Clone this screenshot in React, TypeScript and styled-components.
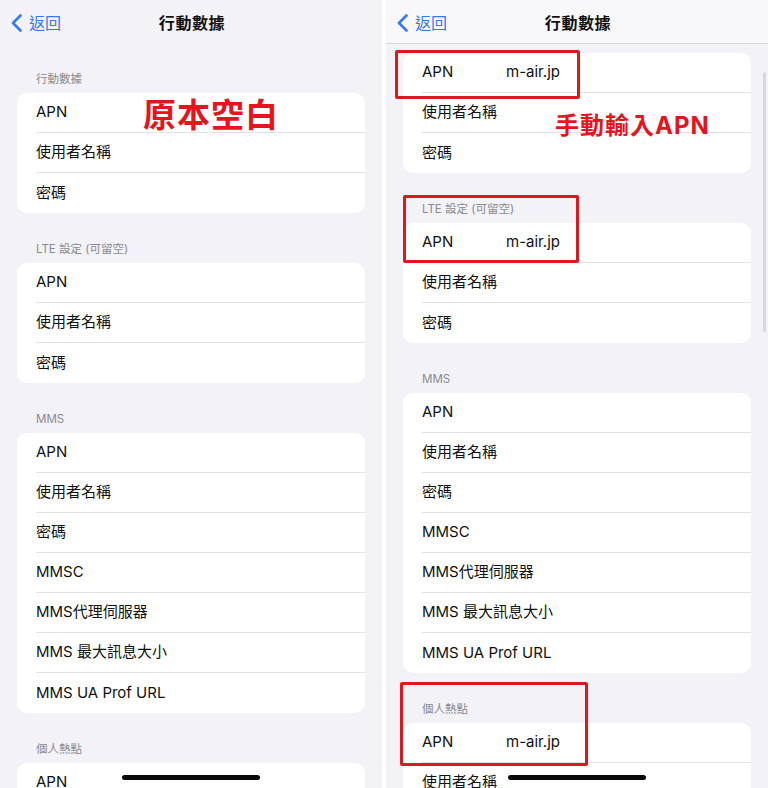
import React from 'react';
import styled, { createGlobalStyle } from 'styled-components';

interface IRow {
    label: string;
    value?: string;
}

interface ISection {
    title: string;
    rows: IRow[];
}

interface IMark {
    left: number;
    top: number;
    width: number;
    height: number;
}

const GlobalStyle = createGlobalStyle`
    html, body {
        margin: 0;
        padding: 0;
        background: #ffffff;
    }
    body {
        font-family: Inter, "Noto Sans CJK TC", "Noto Sans", sans-serif;
        -webkit-font-smoothing: antialiased;
    }
`;

const buildSections = (apn?: string): ISection[] => [
    {
        title: '行動數據',
        rows: [{ label: 'APN', value: apn }, { label: '使用者名稱' }, { label: '密碼' }],
    },
    {
        title: 'LTE 設定 (可留空)',
        rows: [{ label: 'APN', value: apn }, { label: '使用者名稱' }, { label: '密碼' }],
    },
    {
        title: 'MMS',
        rows: [
            { label: 'APN' },
            { label: '使用者名稱' },
            { label: '密碼' },
            { label: 'MMSC' },
            { label: 'MMS代理伺服器' },
            { label: 'MMS 最大訊息大小' },
            { label: 'MMS UA Prof URL' },
        ],
    },
    {
        title: '個人熱點',
        rows: [{ label: 'APN', value: apn }, { label: '使用者名稱' }, { label: '密碼' }],
    },
];

const rightMarks: IMark[] = [
    { left: 9, top: 50, width: 185, height: 49 },
    { left: 17, top: 195, width: 176, height: 68 },
    { left: 14, top: 682, width: 188, height: 84 },
];

const BackChevron = () => (
    <svg width="11" height="18" viewBox="0 0 11 18">
        <polyline
            points="9.5,1.5 2,9 9.5,16.5"
            fill="none"
            stroke="#3478f6"
            strokeWidth="2.6"
            strokeLinecap="round"
            strokeLinejoin="round"
        />
    </svg>
);

interface IPhoneProps {
    sections: ISection[];
    scroll: number;
    bordered: boolean;
    children?: React.ReactNode;
}

const Phone = (props: IPhoneProps): JSX.Element => {
    const { sections, scroll, bordered, children } = props;

    return (
        <PhoneWrap>
            <NavBar $bordered={bordered}>
                <BackButton>
                    <BackChevron />
                    <span>返回</span>
                </BackButton>
                <NavTitle>行動數據</NavTitle>
            </NavBar>
            <ScrollBody>
                <Content $scroll={scroll}>
                    {sections.map((section) => (
                        <Section key={section.title}>
                            <SectionTitle>{section.title}</SectionTitle>
                            <Card>
                                {section.rows.map((row) => (
                                    <Row key={row.label}>
                                        <RowLabel>{row.label}</RowLabel>
                                        {row.value && <RowValue>{row.value}</RowValue>}
                                    </Row>
                                ))}
                            </Card>
                        </Section>
                    ))}
                </Content>
            </ScrollBody>
            {children}
            <HomeIndicator />
        </PhoneWrap>
    );
};

const App = (): JSX.Element => {
    return (
        <>
            <GlobalStyle />
            <Page>
                <Phone sections={buildSections()} scroll={0} bordered={false}>
                    <BigNote>原本空白</BigNote>
                </Phone>
                <Phone sections={buildSections('m-air.jp')} scroll={40} bordered>
                    {rightMarks.map((mark) => (
                        <MarkBox
                            key={mark.top}
                            style={{ left: mark.left, top: mark.top, width: mark.width, height: mark.height }}
                        />
                    ))}
                    <SmallNote>手動輸入APN</SmallNote>
                    <ScrollIndicator />
                </Phone>
            </Page>
        </>
    );
};

export default App;

const Page = styled.div`
    display: grid;
    grid-template-columns: 382px 382px;
    column-gap: 4px;
    width: 768px;
    height: 788px;
    overflow: hidden;
    background: #ffffff;
`;

const PhoneWrap = styled.div`
    position: relative;
    display: flex;
    flex-direction: column;
    height: 788px;
    overflow: hidden;
    background: #f2f2f7;
`;

const NavBar = styled.div<{ $bordered: boolean }>`
    position: relative;
    z-index: 2;
    flex: 0 0 auto;
    height: 43px;
    display: flex;
    flex-direction: row;
    align-items: center;
    justify-content: center;
    background: ${(p) => (p.$bordered ? '#f8f8fa' : '#f2f2f7')};
    border-bottom: 1px solid ${(p) => (p.$bordered ? '#d9d9de' : 'transparent')};
`;

const BackButton = styled.div`
    position: absolute;
    left: 11px;
    top: 13px;
    display: flex;
    flex-direction: row;
    align-items: center;
    gap: 7px;
    color: #3478f6;
    font-size: 16px;
    line-height: 20px;
`;

const NavTitle = styled.div`
    font-size: 16px;
    font-weight: 600;
    color: #111111;
    letter-spacing: 0.6px;
    padding-left: 2px;
`;

const ScrollBody = styled.div`
    flex: 1 1 auto;
    overflow: hidden;
`;

const Content = styled.div<{ $scroll: number }>`
    display: flex;
    flex-direction: column;
    gap: 28px;
    padding: 27px 17px 40px 17px;
    margin-top: ${(p) => -p.$scroll}px;
`;

const Section = styled.div`
    display: flex;
    flex-direction: column;
`;

const SectionTitle = styled.div`
    padding-left: 19px;
    margin-bottom: 6px;
    font-size: 11.5px;
    line-height: 16px;
    color: #8a8a8f;
`;

const Card = styled.div`
    background: #ffffff;
    border-radius: 10px;
    overflow: hidden;
`;

const Row = styled.div`
    display: flex;
    flex-direction: row;
    align-items: center;
    height: 40px;
    margin-left: 19px;
    border-bottom: 1px solid #e3e3e6;
    box-sizing: border-box;
    &:last-child {
        border-bottom: none;
    }
`;

const RowLabel = styled.span`
    min-width: 84px;
    font-size: 15px;
    line-height: 20px;
    margin-top: -1px;
    color: #111111;
`;

const RowValue = styled.span`
    font-size: 15px;
    line-height: 20px;
    margin-top: -1px;
    color: #111111;
`;

const BigNote = styled.div`
    position: absolute;
    left: 143px;
    top: 97px;
    font-size: 33px;
    font-weight: 700;
    line-height: 36px;
    letter-spacing: 1px;
    color: #e6141c;
`;

const SmallNote = styled.div`
    position: absolute;
    left: 169px;
    top: 112px;
    font-size: 24px;
    font-weight: 700;
    line-height: 28px;
    letter-spacing: 1px;
    color: #e6141c;
`;

const MarkBox = styled.div`
    position: absolute;
    z-index: 3;
    box-sizing: border-box;
    border: 3px solid #dc1820;
    border-radius: 2px;
`;

const ScrollIndicator = styled.div`
    position: absolute;
    left: 377px;
    top: 72px;
    width: 3px;
    height: 260px;
    border-radius: 2px;
    background: rgba(0, 0, 0, 0.1);
`;

const HomeIndicator = styled.div`
    position: absolute;
    left: 122px;
    top: 775px;
    width: 138px;
    height: 5px;
    border-radius: 3px;
    background: #0a0a0a;
`;
